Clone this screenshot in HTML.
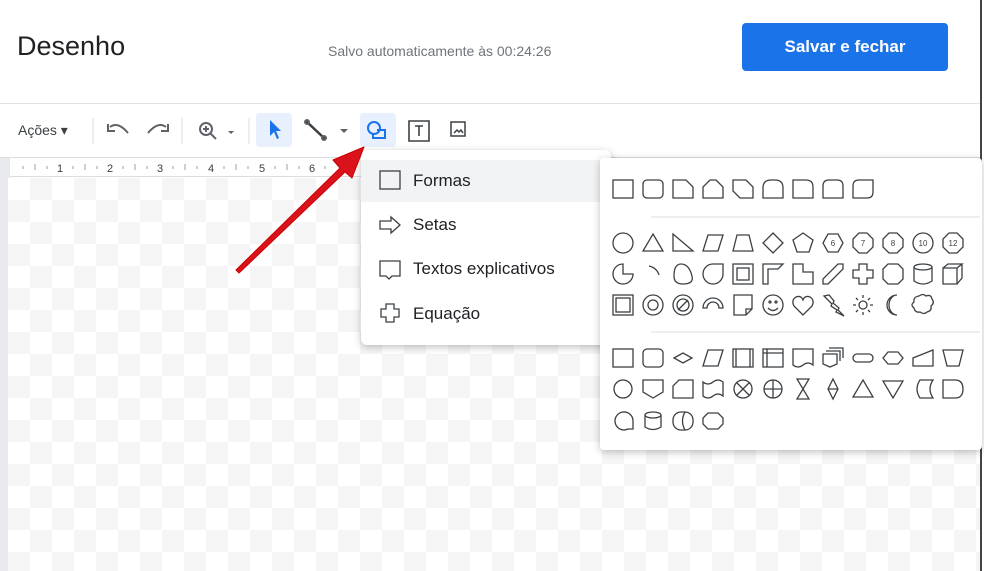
<!DOCTYPE html>
<html><head><meta charset="utf-8"><style>
*{margin:0;padding:0;box-sizing:border-box}
body{width:984px;height:571px;overflow:hidden;background:#fff;font-family:"Liberation Sans",sans-serif;position:relative}
.abs{position:absolute}
.checker{left:8px;top:178px;width:972px;height:393px;
background-color:#fff;
background-image:linear-gradient(45deg,#f5f5f5 25%,transparent 25%,transparent 75%,#f5f5f5 75%),linear-gradient(45deg,#f5f5f5 25%,transparent 25%,transparent 75%,#f5f5f5 75%);
background-size:44px 44px;background-position:0 0,22px 22px}
.menu{left:361px;top:150px;width:250px;height:195px;background:#fff;border-radius:6px;box-shadow:0 2px 8px rgba(0,0,0,.25)}
.mi{position:absolute;left:52px;font-size:17px;color:#202124}
.panel{left:600px;top:158px;width:382px;height:292px;background:#fff;border-radius:4px;box-shadow:0 2px 8px rgba(0,0,0,.25)}
</style></head><body>
<div class="abs" style="left:17px;top:31px;font-size:27px;color:#202124">Desenho</div>
<div class="abs" style="left:328px;top:43px;font-size:14px;color:#70757a">Salvo automaticamente às 00:24:26</div>
<div class="abs" style="left:742px;top:23px;width:206px;height:48px;background:#1a73e8;border-radius:4px;color:#fff;font-size:17px;font-weight:bold;text-align:center;line-height:48px">Salvar e fechar</div>
<div class="abs" style="left:0;top:103px;width:980px;height:1px;background:#e3e3e3"></div>
<div class="abs" style="left:980px;top:0;width:2px;height:571px;background:#444"></div>
<div class="abs" style="left:18px;top:122px;font-size:14px;color:#3c4043">Ações ▾</div>
<div class="abs" style="left:256px;top:113px;width:36px;height:34px;background:#e8f0fe;border-radius:3px"></div>
<div class="abs" style="left:360px;top:113px;width:36px;height:34px;background:#e8f0fe;border-radius:3px"></div>
<div class="abs" style="left:0;top:157px;width:980px;height:1px;background:#dadce0"></div>
<div class="abs" style="left:0;top:158px;width:10px;height:413px;background:#e8eaed"></div>
<div class="abs" style="left:10px;top:158px;width:970px;height:19px;background:#fff;border-bottom:1px solid #dadce0"></div>
<div class="abs checker"></div>
<svg class="abs" style="left:0;top:0" width="984" height="571">
<g stroke="#5f6368" stroke-width="2" fill="none">
<line x1="93" y1="118" x2="93" y2="144" stroke="#dadce0" stroke-width="1"/>
<line x1="182" y1="118" x2="182" y2="144" stroke="#dadce0" stroke-width="1"/>
<line x1="249" y1="118" x2="249" y2="144" stroke="#dadce0" stroke-width="1"/>
<path d="M110 127 Q118 121 128 133 M108 124 L108 131 L115 131"/>
<path d="M166 127 Q158 121 148 133 M168 124 L168 131 L161 131"/>
<circle cx="206" cy="129" r="6"/><path d="M210 133 L216 139 M203 129 h6 M206 126 v6"/>
<path d="M228 131 l3 3 l3 -3" fill="#5f6368" stroke="none"/>
<path d="M307 122 L324 138" stroke="#3c4043" stroke-width="2.5"/>
<circle cx="307" cy="122" r="2" fill="#3c4043"/><circle cx="324" cy="138" r="2" fill="#3c4043"/>
<path d="M340 129 h8 l-4 4z" fill="#5f6368" stroke="none"/>
<path d="M409 121 h20 v20 h-20z M415 126 h8 M419 126 v10" stroke="#3c4043" stroke-width="1.6"/>
<path d="M451 122 h14 v14 h-14z M454 133 l3-3 l2 2 l2-2 l2 3" stroke="#3c4043" stroke-width="1.5"/>
</g>
<path d="M270 120 L270 136 L274 132 L277 139 L279 138 L276 131 L281 131Z" fill="#1a73e8"/>
<circle cx="374" cy="128" r="6" fill="none" stroke="#1a73e8" stroke-width="2"/>
<path d="M377 130 h8 v8 h-12 v-4" fill="none" stroke="#1a73e8" stroke-width="2"/>
<g font-size="11" fill="#3c4043" text-anchor="middle">
<text x="60" y="172">1</text><text x="110" y="172">2</text><text x="160" y="172">3</text><text x="211" y="172">4</text><text x="262" y="172">5</text><text x="312" y="172">6</text>
</g>
<g stroke="#9aa0a6" stroke-width="1">
<path d="M23 166v3M35 164v6M47 166v3M73 166v3M85 164v6M97 166v3M123 166v3M135 164v6M147 166v3M173 166v3M185 164v6M197 166v3M224 166v3M236 164v6M248 166v3M275 166v3M287 164v6M299 166v3M325 166v3"/>
</g>
</svg>
<div class="abs menu">
<div class="abs" style="left:0;top:10px;width:250px;height:42px;background:#f1f3f4"></div>
<svg class="abs" style="left:0;top:0" width="60" height="195" fill="none" stroke="#3c4043" stroke-width="1.3">
<rect x="19" y="21" width="20" height="18"/>
<path d="M19 71 h11 v-4 l9 8 l-9 8 v-4 h-11z"/>
<path d="M19 111 h20 v15 h-8 l-3 3 l-3 -3 h-6z"/>
<path d="M25 154 h8 v5 h5 v8 h-5 v5 h-8 v-5 h-5 v-8 h5z"/>
</svg>
<div class="mi" style="top:21px">Formas</div>
<div class="mi" style="top:65px">Setas</div>
<div class="mi" style="top:109px">Textos explicativos</div>
<div class="mi" style="top:154px">Equação</div>
</div>
<div class="abs panel"></div>
<svg class="abs" style="left:0;top:0" width="984" height="571">
<line x1="651" y1="217" x2="980" y2="217" stroke="#dadce0"/>
<line x1="651" y1="332" x2="980" y2="332" stroke="#dadce0"/>
<g font-size="8" fill="#3c4043" text-anchor="middle">
<text x="833" y="246">6</text><text x="863" y="246">7</text><text x="893" y="246">8</text><text x="923" y="246">10</text><text x="953" y="246">12</text>
</g>
<g fill="none" stroke="#3c4043" stroke-width="1.3">
<g transform="translate(623,189)"><rect x="-10" y="-9" width="20" height="18"/></g>
<g transform="translate(653,189)"><rect x="-10" y="-9" width="20" height="18" rx="4"/></g>
<g transform="translate(683,189)"><path d="M-10-9h13l7 7v11h-20z"/></g>
<g transform="translate(713,189)"><path d="M-10 9v-11l7-7h6l7 7v11z"/></g>
<g transform="translate(743,189)"><path d="M-10-9h13l7 7v11h-13l-7-7z"/></g>
<g transform="translate(773,189)"><path d="M-10 9v-10q0-8 8-8h4q8 0 8 8v10z"/></g>
<g transform="translate(803,189)"><path d="M-10 9v-18h13q7 0 7 7v11z"/></g>
<g transform="translate(833,189)"><path d="M-10 9v-12q0-6 6-6h8q6 0 6 6v12z"/></g>
<g transform="translate(863,189)"><path d="M-10 9v-12q0-6 6-6h14v12q0 6-6 6z"/></g>
<g transform="translate(623,243)"><circle r="10"/></g>
<g transform="translate(653,243)"><path d="M0-9l10 17h-20z"/></g>
<g transform="translate(683,243)"><path d="M-10-9v17h20z"/></g>
<g transform="translate(713,243)"><path d="M-5-8h15l-5 16h-15z"/></g>
<g transform="translate(743,243)"><path d="M-6-8h12l4 16h-20z"/></g>
<g transform="translate(773,243)"><path d="M0-10l10 10l-10 10l-10-10z"/></g>
<g transform="translate(803,243)"><path d="M0-10l10 7l-4 12h-12l-4-12z"/></g>
<g transform="translate(833,243)"><path d="M-5-9h10l5 9l-5 9h-10l-5-9z"/></g>
<g transform="translate(863,243)"><path d="M-4-10h8l6 6v8l-6 6h-8l-6-6v-8z"/></g>
<g transform="translate(893,243)"><path d="M-4-10h8l6 6v8l-6 6h-8l-6-6v-8z"/></g>
<g transform="translate(923,243)"><circle r="10"/></g>
<g transform="translate(953,243)"><path d="M-4-10h8l6 6v8l-6 6h-8l-6-6v-8z"/></g>
<g transform="translate(623,274)"><path d="M0 0h10a10 10 0 1 1-10-10z"/></g>
<g transform="translate(653,274)"><path d="M-4-8q8 2 10 9"/></g>
<g transform="translate(683,274)"><path d="M-2-10q8 0 11 12q2 8-9 8q-9 0-9-8q0-12 7-12z"/></g>
<g transform="translate(713,274)"><path d="M10-10v10a10 10 0 1 1-10-10z"/></g>
<g transform="translate(743,274)"><rect x="-10" y="-10" width="20" height="20"/><rect x="-6" y="-6" width="12" height="12"/></g>
<g transform="translate(773,274)"><path d="M-10 10v-20h20l-5 5h-10v15z"/></g>
<g transform="translate(803,274)"><path d="M-10-10h10v8h10v12h-20z"/></g>
<g transform="translate(833,274)"><path d="M-10 10v-5l15-15h5v5l-15 15z"/></g>
<g transform="translate(863,274)"><path d="M-4-10h8v6h6v8h-6v6h-8v-6h-6v-8h6z"/></g>
<g transform="translate(893,274)"><path d="M-5-10h10l5 5v10l-5 5h-10l-5-5v-10z"/></g>
<g transform="translate(923,274)"><ellipse cy="-7" rx="9" ry="3"/><path d="M-9-7v14q9 6 18 0v-14"/></g>
<g transform="translate(953,274)"><path d="M-10-6h14v16h-14z M-10-6l5-4h14l-5 4 M9-10v14l-5 6"/></g>
<g transform="translate(623,305)"><rect x="-10" y="-10" width="20" height="20"/><rect x="-7" y="-7" width="14" height="14"/></g>
<g transform="translate(653,305)"><circle r="10"/><circle r="5"/></g>
<g transform="translate(683,305)"><circle r="10"/><circle r="6"/><path d="M-5 5l10-10"/></g>
<g transform="translate(713,305)"><path d="M-10 3a10 10 0 0 1 20 0h-4a6 6 0 0 0-12 0z"/></g>
<g transform="translate(743,305)"><path d="M-9-10h18v14l-6 6h-12z M3 10v-6h6"/></g>
<g transform="translate(773,305)"><circle r="10"/><circle cx="-3" cy="-3" r="1"/><circle cx="3" cy="-3" r="1"/><path d="M-5 3q5 5 10 0"/></g>
<g transform="translate(803,305)"><path d="M0 10l-9-9q-3-6 2-9q5-2 7 3q2-5 7-3q5 3 2 9z"/></g>
<g transform="translate(833,305)"><path d="M-9-9l5-1l5 6l-1 2l6 5l-1 2l6 6l-8-4l1-2l-6-4l1-2z"/></g>
<g transform="translate(863,305)"><circle r="4"/><path d="M0-10v3M0 7v3M-10 0h3M7 0h3M-7-7l2 2M5 5l2 2M-7 7l2-2M5-5l2-2"/></g>
<g transform="translate(893,305)"><path d="M4-10a10 10 0 1 0 0 20a8 10 0 0 1 0-20z"/></g>
<g transform="translate(923,305)"><path d="M-4-9q4-3 7 0q5-2 6 3q3 4-1 7q1 5-4 6q-3 3-7 0q-5 1-6-4q-4-3 0-6q-1-5 5-6z"/></g>
<g transform="translate(623,358)"><rect x="-10" y="-9" width="20" height="18"/></g>
<g transform="translate(653,358)"><rect x="-10" y="-9" width="20" height="18" rx="4"/></g>
<g transform="translate(683,358)"><path d="M-9 0l9-5l9 5l-9 5z"/></g>
<g transform="translate(713,358)"><path d="M-5-8h15l-5 16h-15z"/></g>
<g transform="translate(743,358)"><rect x="-10" y="-9" width="20" height="18"/><path d="M-7-9v18M7-9v18"/></g>
<g transform="translate(773,358)"><rect x="-10" y="-9" width="20" height="18"/><path d="M-10-5h20M-6-9v18"/></g>
<g transform="translate(803,358)"><path d="M-10-9h20v16q-5-4-10 0q-5 4-10 0z"/></g>
<g transform="translate(833,358)"><path d="M-10-4h14v10l-7 3l-7-3z M-7-7h14v10 M-4-10h14v10"/></g>
<g transform="translate(863,358)"><rect x="-10" y="-4" width="20" height="8" rx="4"/></g>
<g transform="translate(893,358)"><path d="M-5-6h10l5 6l-5 6h-10l-5-6z"/></g>
<g transform="translate(923,358)"><path d="M-10 8v-8l20-8v16z"/></g>
<g transform="translate(953,358)"><path d="M-10-8h20l-4 16h-12z"/></g>
<g transform="translate(623,389)"><circle r="9"/></g>
<g transform="translate(653,389)"><path d="M-10-9h20v12l-10 6l-10-6z"/></g>
<g transform="translate(683,389)"><path d="M-4-9h14v18h-20v-12z"/></g>
<g transform="translate(713,389)"><path d="M-10-7q5 4 10 0q5-4 10 0v14q-5-4-10 0q-5 4-10 0z"/></g>
<g transform="translate(743,389)"><circle r="9"/><path d="M-6-6l12 12M6-6l-12 12"/></g>
<g transform="translate(773,389)"><circle r="9"/><path d="M0-9v18M-9 0h18"/></g>
<g transform="translate(803,389)"><path d="M-6-10h12l-12 20h12z"/></g>
<g transform="translate(833,389)"><path d="M0-10l5 10l-5 10l-5-10z M-5 0h10"/></g>
<g transform="translate(863,389)"><path d="M0-9l10 17h-20z"/></g>
<g transform="translate(893,389)"><path d="M-10-8h20l-10 17z"/></g>
<g transform="translate(923,389)"><path d="M-3-9h13q-6 9 0 18h-13q-6-9 0-18z"/></g>
<g transform="translate(953,389)"><path d="M-10-9h12q8 0 8 9q0 9-8 9h-12z"/></g>
<g transform="translate(623,421)"><path d="M10 8v-8a9 9 0 1 0-5 8z"/></g>
<g transform="translate(653,421)"><ellipse cy="-6" rx="8" ry="3"/><path d="M-8-6v12q8 5 16 0v-12"/></g>
<g transform="translate(683,421)"><rect x="-10" y="-9" width="20" height="18" rx="8"/><path d="M2-9q-5 9 0 18"/></g>
<g transform="translate(713,421)"><path d="M-5-8h10l5 5v6l-5 5h-10l-5-5v-6z"/></g>
</g>
<path d="M236 270 L340 168 L333 160 L364 147 L352 178 L345 172 L239 273 Z" fill="#d9121b" stroke="#c00" stroke-width="1" stroke-linejoin="round"/>
</svg>
</body></html>
